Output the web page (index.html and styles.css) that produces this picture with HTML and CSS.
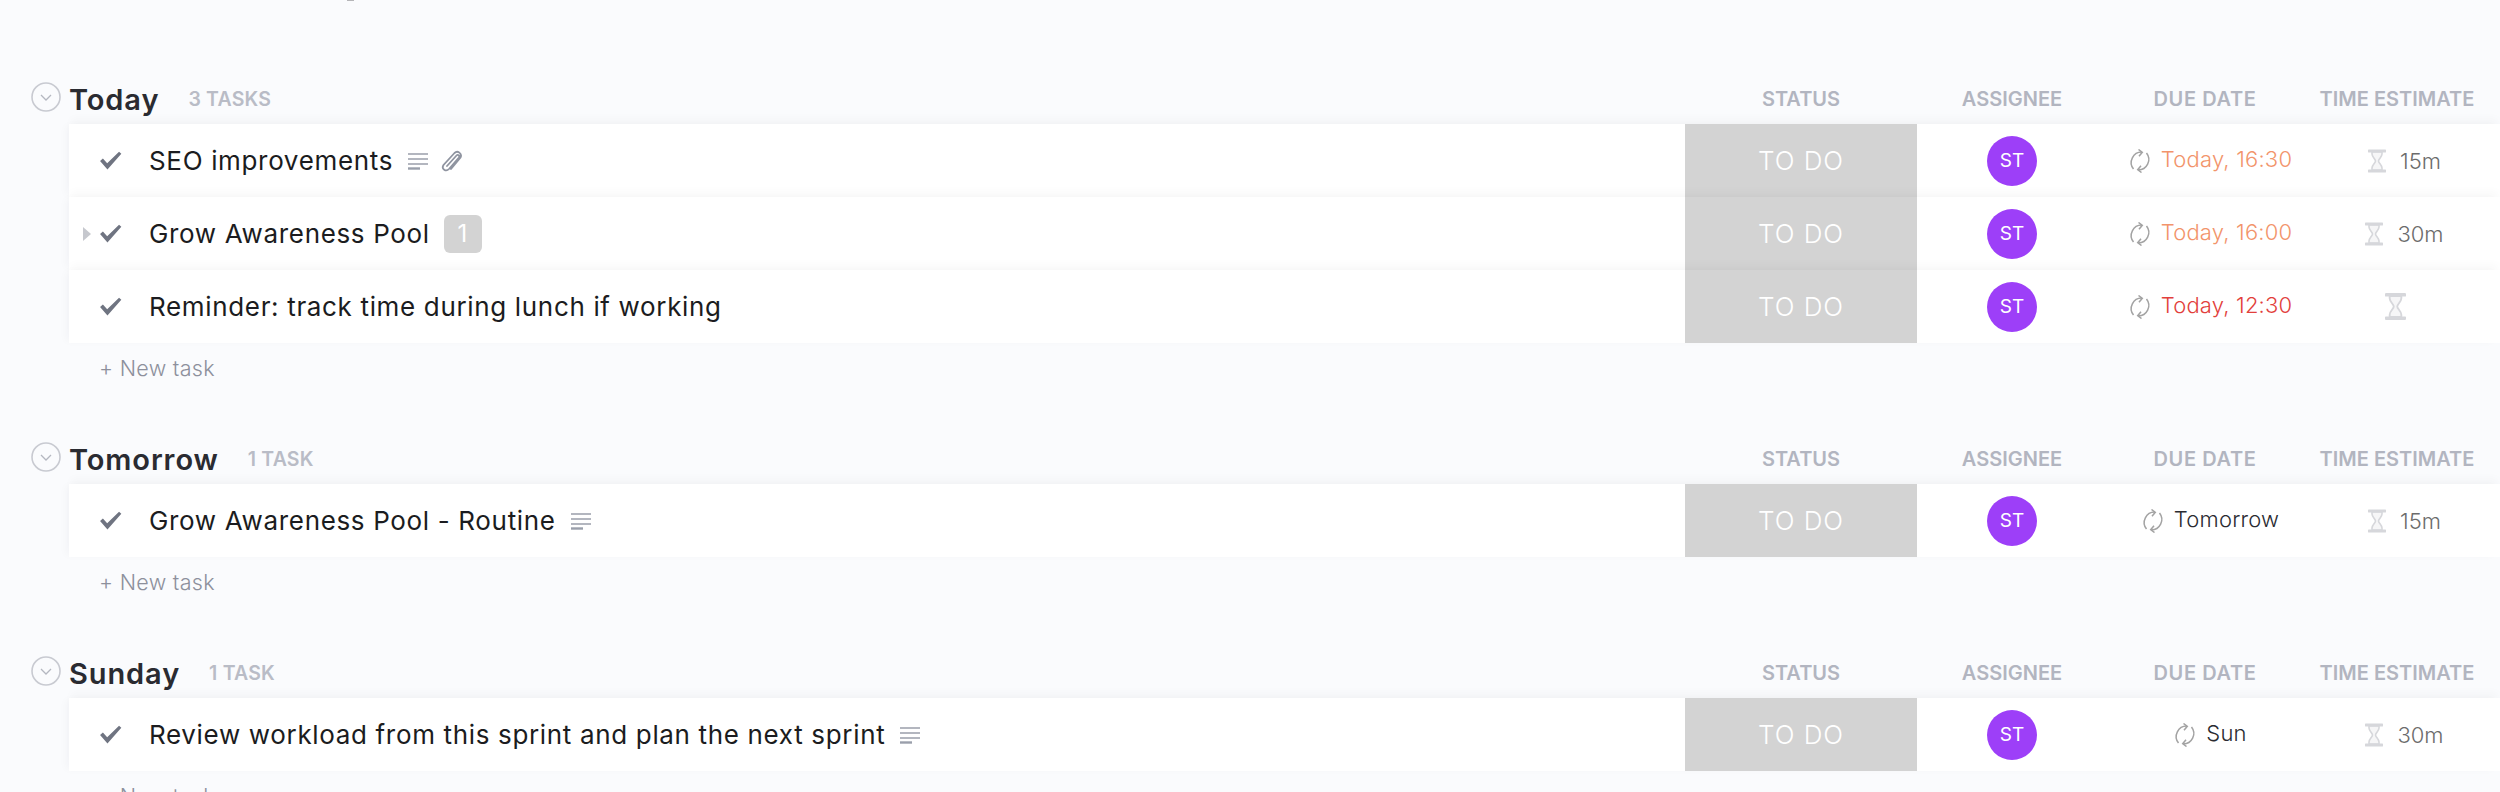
FILE: index.html
```html
<!doctype html>
<html lang="en">
<head>
    <meta charset="UTF-8">
    <title>Tasks</title>
    <link rel="stylesheet" href="styles.css">
</head>
<body>

    <svg class="defs" width="0" height="0">
        <symbol id="i-check" viewBox="0 0 24 20"><path d="M1 10.500l3-2.600 4.500 5.100L21 .8l2.400 2L8.800 19.500z" fill="#6f7481"/></symbol>
        <symbol id="i-desc" viewBox="0 0 22 18"><path d="M1 2h20M1 7h20M1 12h20" fill="none" stroke="#9a9fab" stroke-width="1.700"/><path d="M1 16.500h12" fill="none" stroke="#9a9fab" stroke-width="2.400"/></symbol>
        <symbol id="i-clip" viewBox="0 0 24 24"><path d="M8 17l9.500-10.500c1.400-1.600 3.600.3 2.400 2L10 20c-3 3.200-8 0-5.500-4L15.500 4c3-3 8 .5 6 4.500L12 20" fill="none" stroke="#8f94a0" stroke-width="1.800" stroke-linecap="round"/></symbol>
        <symbol id="i-repeat" viewBox="0 0 24 24"><g fill="none" stroke="#a3a3a3" stroke-width="1.500"><path d="M14 3A10.500 10.500 0 0 0 5.500 20"/><path d="M10.500 .5l3.800 2.800-3.300 4"/><path d="M10 21A10.500 10.500 0 0 0 18.500 4"/><path d="M13.500 23.500l-3.800-2.800 3.300-4"/></g></symbol>
        <symbol id="i-glass" viewBox="0 0 18 24"><path d="M4 3v2c0 3 3.500 5 3.500 7S4 16 4 19v2h10v-2c0-3-3.500-5-3.500-7S14 8 14 5V3z" fill="#f6f6f7" stroke="#d6d7db" stroke-width="1.600"/><path d="M1 2h16M1 22h16" fill="none" stroke="#d6d7db" stroke-width="3" stroke-linecap="round"/></symbol>
        <symbol id="i-chev" viewBox="0 0 30 30"><circle cx="15" cy="15" r="14" fill="none" stroke="#c8cad1" stroke-width="1.600"/><path d="M10 13l5 5 5-5" fill="none" stroke="#b4b7c0" stroke-width="1.300"/></symbol>
    </svg>

    <div class="top-cut"></div>

    <section class="group">
        <div class="group-head">
            <svg class="toggle"><use href="#i-chev"/></svg>
            <h2 class="group-name">Today</h2>
            <span class="group-count">3 TASKS</span>
            <span class="col-title col-status">STATUS</span>
            <span class="col-title col-assignee">ASSIGNEE</span>
            <span class="col-title col-due">DUE DATE</span>
            <span class="col-title col-time">TIME ESTIMATE</span>
        </div>
        <div class="row">
            <svg class="check"><use href="#i-check"/></svg>
            <div class="task">SEO improvements <svg class="desc"><use href="#i-desc"/></svg><svg class="clip"><use href="#i-clip"/></svg></div>
            <div class="status">TO DO</div>
            <div class="assignee"><span class="avatar">ST</span></div>
            <div class="due"><svg class="repeat"><use href="#i-repeat"/></svg><span class="soon">Today, 16:30</span></div>
            <div class="time"><svg class="glass"><use href="#i-glass"/></svg><span>15m</span></div>
        </div>
        <div class="row">
            <span class="arrow"></span>
            <svg class="check"><use href="#i-check"/></svg>
            <div class="task">Grow Awareness Pool <span class="sub-count">1</span></div>
            <div class="status">TO DO</div>
            <div class="assignee"><span class="avatar">ST</span></div>
            <div class="due"><svg class="repeat"><use href="#i-repeat"/></svg><span class="soon">Today, 16:00</span></div>
            <div class="time"><svg class="glass"><use href="#i-glass"/></svg><span>30m</span></div>
        </div>
        <div class="row">
            <svg class="check"><use href="#i-check"/></svg>
            <div class="task">Reminder: track time during lunch if working</div>
            <div class="status">TO DO</div>
            <div class="assignee"><span class="avatar">ST</span></div>
            <div class="due"><svg class="repeat"><use href="#i-repeat"/></svg><span class="late">Today, 12:30</span></div>
            <div class="time"><svg class="glass big"><use href="#i-glass"/></svg></div>
        </div>
        <div class="new-task">+ New task</div>
    </section>

    <section class="group">
        <div class="group-head">
            <svg class="toggle"><use href="#i-chev"/></svg>
            <h2 class="group-name">Tomorrow</h2>
            <span class="group-count">1 TASK</span>
            <span class="col-title col-status">STATUS</span>
            <span class="col-title col-assignee">ASSIGNEE</span>
            <span class="col-title col-due">DUE DATE</span>
            <span class="col-title col-time">TIME ESTIMATE</span>
        </div>
        <div class="row">
            <svg class="check"><use href="#i-check"/></svg>
            <div class="task">Grow Awareness Pool - Routine <svg class="desc"><use href="#i-desc"/></svg></div>
            <div class="status">TO DO</div>
            <div class="assignee"><span class="avatar">ST</span></div>
            <div class="due"><svg class="repeat"><use href="#i-repeat"/></svg><span>Tomorrow</span></div>
            <div class="time"><svg class="glass"><use href="#i-glass"/></svg><span>15m</span></div>
        </div>
        <div class="new-task">+ New task</div>
    </section>

    <section class="group">
        <div class="group-head">
            <svg class="toggle"><use href="#i-chev"/></svg>
            <h2 class="group-name">Sunday</h2>
            <span class="group-count">1 TASK</span>
            <span class="col-title col-status">STATUS</span>
            <span class="col-title col-assignee">ASSIGNEE</span>
            <span class="col-title col-due">DUE DATE</span>
            <span class="col-title col-time">TIME ESTIMATE</span>
        </div>
        <div class="row">
            <svg class="check"><use href="#i-check"/></svg>
            <div class="task">Review workload from this sprint and plan the next sprint <svg class="desc"><use href="#i-desc"/></svg></div>
            <div class="status">TO DO</div>
            <div class="assignee"><span class="avatar">ST</span></div>
            <div class="due"><svg class="repeat"><use href="#i-repeat"/></svg><span>Sun</span></div>
            <div class="time"><svg class="glass"><use href="#i-glass"/></svg><span>30m</span></div>
        </div>
        <div class="new-task">+ New task</div>
    </section>

</body>
</html>
```

FILE: styles.css
```css
*{
    box-sizing: border-box;
}
html, body{
    height: 100%;
    overflow: hidden;
}
body{
    margin: 0;
    background: #fafbfd;
    font-family: "Inter", "Liberation Sans", sans-serif;
    color: #2a2b31;
}
.defs{
    position: absolute;
}
.top-cut{
    height: 74px;
    padding-left: 347px;
}
.top-cut::before{
    content: "";
    display: block;
    width: 7px;
    height: 1px;
    background: #b5b5b8;
}
.group{
    padding: 0 0 41px 69px;
}
.group-head{
    height: 50px;
    display: grid;
    grid-template-columns: auto auto 1fr 232px 190px 196px 188px;
    align-items: center;
    position: relative;
    padding-right: 9px;
}
.toggle{
    position: absolute;
    left: -38px;
    top: 8px;
    width: 30px;
    height: 30px;
}
.group-name{
    margin: 0;
    font-size: 29px;
    font-weight: 600;
    letter-spacing: 0.9px;
}
.group-count{
    margin-left: 29px;
    font-size: 19.5px;
    font-weight: 600;
    letter-spacing: 0.2px;
    color: #b9bcc6;
}
.col-title{
    font-size: 20px;
    font-weight: 600;
    color: #b2b5c0;
    text-align: center;
    white-space: nowrap;
}
.col-status{
    grid-column: 4;
}
.col-due{
    letter-spacing: 0.6px;
}
.row{
    height: 73px;
    background: #fff;
    display: grid;
    grid-template-columns: 1fr 232px 190px 196px 197px;
    align-items: center;
    padding-left: 80px;
    position: relative;
    box-shadow: -5px 0 8px -2px rgba(30, 30, 60, 0.03), 0 -8px 8px -2px rgba(0, 0, 0, 0.025);
}
.arrow{
    position: absolute;
    left: 14px;
    top: 30px;
    border-left: 8px solid #c6c8ce;
    border-top: 7px solid transparent;
    border-bottom: 7px solid transparent;
}
.check{
    position: absolute;
    left: 30px;
    top: 27px;
    width: 23px;
    height: 19px;
}
.task{
    font-size: 26px;
    letter-spacing: 0.66px;
    color: #1b1c20;
    display: flex;
    align-items: center;
    gap: 14px;
    white-space: nowrap;
}
.desc{
    width: 22px;
    height: 18px;
}
.clip{
    width: 24px;
    height: 24px;
    margin-left: -4px;
}
.sub-count{
    background: #d3d3d3;
    color: #fff;
    font-size: 24px;
    width: 38px;
    height: 38px;
    border-radius: 6px;
    display: flex;
    align-items: center;
    justify-content: center;
}
.status{
    height: 73px;
    background: #d3d3d3;
    color: #fff;
    font-size: 26px;
    font-weight: 350;
    letter-spacing: 1px;
    display: flex;
    align-items: center;
    justify-content: center;
}
.assignee{
    display: flex;
    justify-content: center;
}
.avatar{
    width: 50px;
    height: 50px;
    border-radius: 50%;
    background: #9d3ff8;
    color: #fff;
    font-size: 19px;
    display: flex;
    align-items: center;
    justify-content: center;
}
.due{
    display: flex;
    justify-content: center;
    align-items: center;
    gap: 9px;
    padding-left: 10px;
    font-size: 22px;
    font-weight: 350;
    letter-spacing: 0.2px;
}
.due span{
    margin-top: -3px;
}
.repeat{
    width: 24px;
    height: 24px;
}
.soon{
    color: #f2946b;
}
.late{
    color: #e23f3c;
}
.time{
    display: flex;
    justify-content: center;
    align-items: center;
    gap: 14px;
    padding: 0 9px 0 15px;
    font-size: 22px;
    font-weight: 350;
    color: #6c6c6c;
}
.glass{
    width: 18px;
    height: 24px;
}
.glass.big{
    width: 21px;
    height: 29px;
    margin-right: 19px;
}
.new-task{
    height: 50px;
    padding-left: 30px;
    display: flex;
    align-items: center;
    font-size: 21.5px;
    font-weight: 350;
    letter-spacing: 0.3px;
    color: #8d909c;
}
```
